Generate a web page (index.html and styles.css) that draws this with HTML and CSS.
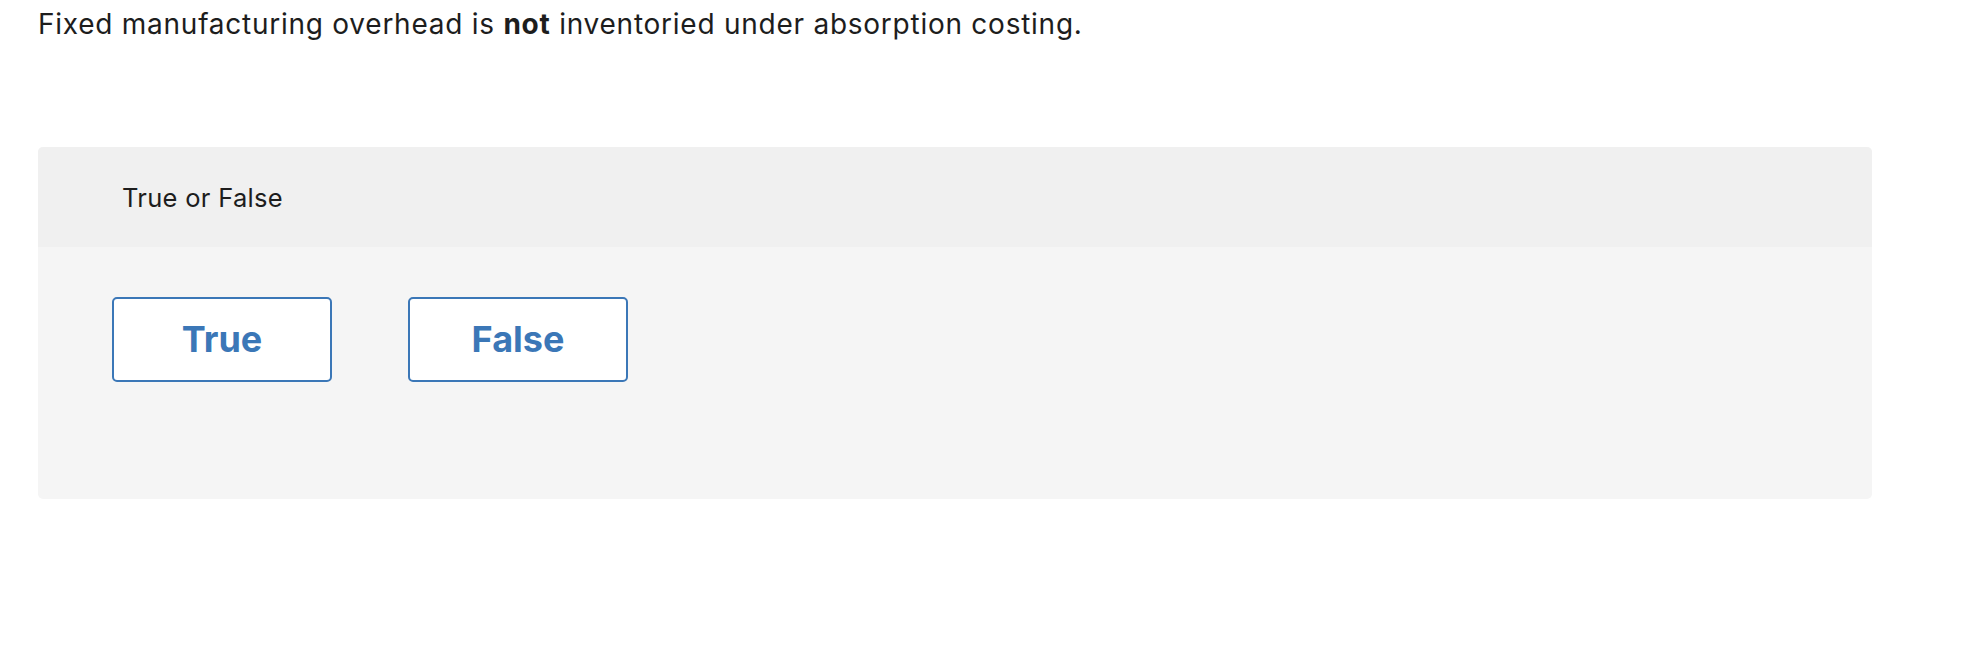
FILE: index.html
```html
<!DOCTYPE html>
<html lang="en">
<head>
<meta charset="utf-8">
<title>True or False</title>
<link rel="stylesheet" href="styles.css">
</head>
<body>
<main class="page">
  <p class="question">Fixed manufacturing overhead is <strong>not</strong> inventoried under absorption costing.</p>
  <section class="panel">
    <div class="panel-head">True or False</div>
    <div class="panel-body">
      <button class="choice" type="button">True</button>
      <button class="choice" type="button">False</button>
    </div>
  </section>
</main>
</body>
</html>
```

FILE: styles.css
```css
html, body {
  margin: 0;
  padding: 0;
  background: #ffffff;
}

body {
  font-family: Inter, "Open Sans", "Liberation Sans", sans-serif;
  color: #1d1d1d;
}

.page {
  padding: 0 108px 0 38px;
}

.question {
  margin: 0;
  padding-top: 6px;
  font-size: 28px;
  line-height: 36px;
  letter-spacing: 0.75px;
}

.question strong {
  font-weight: 700;
}

.panel {
  margin-top: 105px;
  width: 1834px;
  border-radius: 5px;
  overflow: hidden;
  background: #f5f5f5;
}

.panel-head {
  height: 100px;
  box-sizing: border-box;
  background: #f0f0f0;
  padding-left: 84px;
  display: flex;
  align-items: center;
  font-size: 25.5px;
  letter-spacing: 0.3px;
}

.panel-body {
  height: 252px;
  box-sizing: border-box;
  padding: 50px 0 0 74px;
  display: flex;
  align-items: flex-start;
  gap: 76px;
}

.choice {
  width: 220px;
  height: 85px;
  box-sizing: border-box;
  border: 2px solid #3b77b7;
  border-radius: 5px;
  background: #ffffff;
  color: #3b77b7;
  font-family: Inter, "Open Sans", "Liberation Sans", sans-serif;
  font-weight: 700;
  font-size: 36px;
  padding: 0 0 2px;
  cursor: pointer;
}
```
